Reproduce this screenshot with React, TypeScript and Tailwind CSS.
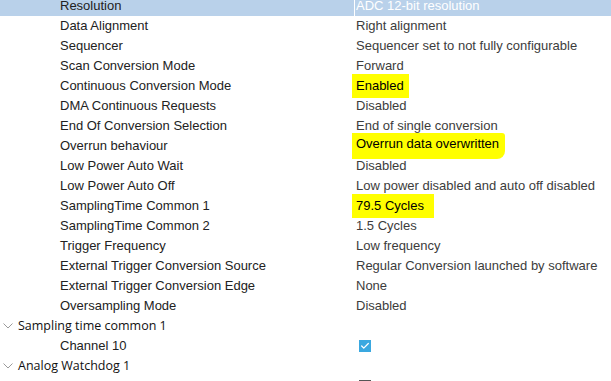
import { Check } from "lucide-react";

type Row = {
  label: string;
  value?: string;
  mark?: "plain" | "wavy" | "short";
  group?: boolean;
  check?: boolean | "off";
  selected?: boolean;
};

const rows: Row[] = [
  { label: "Resolution", value: "ADC 12-bit resolution", selected: true },
  { label: "Data Alignment", value: "Right alignment" },
  { label: "Sequencer", value: "Sequencer set to not fully configurable" },
  { label: "Scan Conversion Mode", value: "Forward" },
  { label: "Continuous Conversion Mode", value: "Enabled", mark: "plain" },
  { label: "DMA Continuous Requests", value: "Disabled" },
  { label: "End Of Conversion Selection", value: "End of single conversion" },
  { label: "Overrun behaviour", value: "Overrun data overwritten", mark: "wavy" },
  { label: "Low Power Auto Wait", value: "Disabled" },
  { label: "Low Power Auto Off", value: "Low power disabled and auto off disabled" },
  { label: "SamplingTime Common 1", value: "79.5 Cycles", mark: "short" },
  { label: "SamplingTime Common 2", value: "1.5 Cycles" },
  { label: "Trigger Frequency", value: "Low frequency" },
  { label: "External Trigger Conversion Source", value: "Regular Conversion launched by software" },
  { label: "External Trigger Conversion Edge", value: "None" },
  { label: "Oversampling Mode", value: "Disabled" },
  { label: "Sampling time common 1", group: true },
  { label: "Channel 10", check: true },
  { label: "Analog Watchdog 1", group: true },
  { label: "Enable Analog WatchDog1 Mode", check: "off" },
];

const Chevron = () => (
  <svg width="10" height="6" viewBox="0 0 10 6" className="text-[#9a9a9a]">
    <path d="M0.5 0.5 L5 5 L9.5 0.5" fill="none" stroke="currentColor" strokeWidth="1" />
  </svg>
);

const Value = ({ row }: { row: Row }) => {
  if (row.check === true) {
    return (
      <span className="ml-[3px] flex h-3 w-3 items-center justify-center bg-[#3aa8e0]">
        <Check size={10} strokeWidth={3} className="text-white" />
      </span>
    );
  }
  if (row.check === "off") {
    return <span className="ml-[3px] h-3 w-3 border border-[#555] bg-white" />;
  }
  if (row.mark === "plain") {
    return (
      <span className="-ml-[4px] bg-[#ffff00] pl-[4px] pr-[5px] pt-[2px] pb-[3px]">{row.value}</span>
    );
  }
  if (row.mark === "wavy") {
    return (
      <span className="-ml-[4px] rounded-br-[8px] rounded-tr-[3px] bg-[#ffff00] pl-[4px] pr-[6px] pt-[1px] pb-[5px]">
        {row.value}
      </span>
    );
  }
  if (row.mark === "short") {
    return (
      <span className="-ml-[4px] bg-[#ffff00] pl-[4px] pr-[10px] pt-[2px] pb-[2px]">{row.value}</span>
    );
  }
  return <span className={row.selected ? "text-white" : "text-[#3c3c3c]"}>{row.value}</span>;
};

export default function App() {
  return (
    <div className="h-[381px] w-[611px] overflow-hidden bg-white font-['Liberation_Sans',Arial,sans-serif] text-[13px]">
      <div className="-mt-[4px] flex flex-col">
        {rows.map((row, i) =>
          row.group ? (
            <div key={i} className="flex h-5 items-center">
              <span className="ml-[3px] mr-[5px] flex w-[10px]">
                <Chevron />
              </span>
              <span className="font-['Open_Sans','Noto_Sans',sans-serif] text-[12.5px] text-[#111]">
                {row.label}
              </span>
            </div>
          ) : (
            <div
              key={i}
              className={`flex h-5 items-center ${row.selected ? "bg-[#b9d1ea]" : ""}`}
            >
              <span className="w-[354px] shrink-0 pl-[60px] text-[#222]">{row.label}</span>
              <span className={`h-full w-px ${row.selected ? "bg-white" : ""}`} />
              <span className="flex items-center pl-[1px]">
                <Value row={row} />
              </span>
            </div>
          )
        )}
      </div>
    </div>
  );
}
